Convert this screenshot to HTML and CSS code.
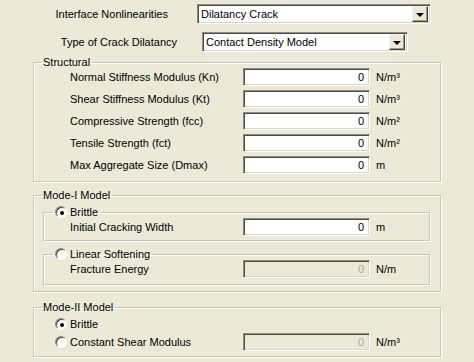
FILE: index.html
```html
<!DOCTYPE html>
<html>
<head>
<meta charset="utf-8">
<link rel="stylesheet" href="styles.css">
</head>
<body>
<div class="dlg">
  <div class="top-row">
    <span class="top-lbl l1">Interface Nonlinearities</span>
    <div class="combo c1"><span class="combo-txt">Dilatancy Crack</span><span class="arrow"><span class="tri"></span></span></div>
  </div>
  <div class="top-row r2">
    <span class="top-lbl l2">Type of Crack Dilatancy</span>
    <div class="combo c2"><span class="combo-txt">Contact Density Model</span><span class="arrow"><span class="tri"></span></span></div>
  </div>

  <fieldset class="grp structural">
    <legend class="lg">Structural</legend>
    <div class="body pad36">
      <div class="field"><span class="flbl">Normal Stiffness Modulus (Kn)</span><div class="inp">0</div><span class="unit">N/m³</span></div>
      <div class="field"><span class="flbl">Shear Stiffness Modulus (Kt)</span><div class="inp">0</div><span class="unit">N/m³</span></div>
      <div class="field"><span class="flbl">Compressive Strength (fcc)</span><div class="inp">0</div><span class="unit">N/m²</span></div>
      <div class="field"><span class="flbl">Tensile Strength (fct)</span><div class="inp">0</div><span class="unit">N/m²</span></div>
      <div class="field"><span class="flbl">Max Aggregate Size (Dmax)</span><div class="inp">0</div><span class="unit">m</span></div>
    </div>
  </fieldset>

  <fieldset class="grp mode1">
    <legend class="lg">Mode-I Model</legend>
    <div class="body m1body">
      <fieldset class="sub sub1">
        <legend class="lg rlg"><span class="radio on"></span>Brittle</legend>
        <div class="body pad26 s1body">
          <div class="field"><span class="flbl">Initial Cracking Width</span><div class="inp">0</div><span class="unit">m</span></div>
        </div>
      </fieldset>
      <fieldset class="sub sub2">
        <legend class="lg rlg"><span class="radio"></span>Linear Softening</legend>
        <div class="body pad26 s2body">
          <div class="field"><span class="flbl">Fracture Energy</span><div class="inp dis">0</div><span class="unit">N/m</span></div>
        </div>
      </fieldset>
    </div>
  </fieldset>

  <fieldset class="grp mode2">
    <legend class="lg">Mode-II Model</legend>
    <div class="body m2body">
      <div class="ropt r-first"><span class="radio on"></span><span>Brittle</span></div>
      <div class="field ropt-field"><span class="flbl rl"><span class="radio"></span><span>Constant Shear Modulus</span></span><div class="inp dis">0</div><span class="unit">N/m³</span></div>
    </div>
  </fieldset>
</div>
</body>
</html>
```

FILE: styles.css
```css
html, body {
  margin: 0;
  padding: 0;
  background: #ece9d8;
}
body {
  font-family: "Liberation Sans", Arial, sans-serif;
  font-size: 11px;
  color: #000;
  width: 474px;
  height: 362px;
  overflow: hidden;
}
.dlg {
  width: 474px;
}
.top-row {
  display: flex;
  align-items: center;
  height: 20px;
  margin-top: 4px;
}
.top-row.r2 {
  margin-top: 8px;
}
.top-lbl {
  text-align: right;
  flex: none;
}
.l1 { width: 168px; margin-right: 29px; }
.l2 { width: 177px; margin-right: 25px; }

.combo {
  box-sizing: border-box;
  height: 20px;
  background: #fff;
  border-top: 1px solid #8f8c7f;
  border-left: 1px solid #8f8c7f;
  border-right: 1px solid #fff;
  border-bottom: 1px solid #fff;
  box-shadow: inset 1px 1px 0 #4e4c45, inset -1px -1px 0 #d8d5c6;
  display: flex;
  align-items: center;
  padding: 0 2px 0 3px;
}
.c1 { width: 234px; }
.c2 { width: 206px; }
.combo-txt {
  flex: 1;
  white-space: nowrap;
  overflow: hidden;
}
.arrow {
  box-sizing: border-box;
  width: 16px;
  height: 16px;
  background: #ece9d8;
  border-top: 1px solid #f4f3ee;
  border-left: 1px solid #f4f3ee;
  border-right: 1px solid #404040;
  border-bottom: 1px solid #404040;
  box-shadow: inset -1px -1px 0 #9d9a8c;
  display: flex;
  align-items: center;
  justify-content: center;
}
.tri {
  width: 0;
  height: 0;
  border-left: 4px solid transparent;
  border-right: 4px solid transparent;
  border-top: 4px solid #000;
  margin-top: 1px;
}

fieldset {
  margin: 0;
  padding: 0;
  min-width: 0;
  border: 1px solid #c9c6b6;
  box-shadow: 1px 1px 0 #fdfdfb, inset 1px 1px 0 #fdfdfb;
}
.lg {
  padding: 0 2px;
  line-height: 12px;
  height: 12px;
  margin-left: 7px;
  display: flex;
  align-items: center;
}
.grp {
  margin-left: 33px;
  width: 408px;
  box-sizing: border-box;
}
.structural { margin-top: 4px; }
.mode1 { margin-top: 7px; }
.mode2 { margin-top: 9px; }

.pad36 { padding: 0 0 7px 36px; }
.pad26 { padding-left: 26px; }

.field {
  display: flex;
  align-items: center;
  height: 18px;
  margin-bottom: 4px;
}
.field:last-child { margin-bottom: 0; }
.flbl {
  width: 173px;
  flex: none;
  white-space: nowrap;
}
.inp {
  box-sizing: border-box;
  width: 127px;
  height: 18px;
  background: #fff;
  border-top: 1px solid #8f8c7f;
  border-left: 1px solid #8f8c7f;
  border-right: 1px solid #fff;
  border-bottom: 1px solid #fff;
  box-shadow: inset 1px 1px 0 #4e4c45, inset -1px -1px 0 #d8d5c6;
  text-align: right;
  padding-right: 5px;
  line-height: 16px;
  flex: none;
}
.inp.dis {
  background: #ece9d8;
  color: #aca899;
}
.unit {
  margin-left: 6px;
  white-space: nowrap;
}

.m1body { padding: 0 9px 6px 9px; }
.sub {
  width: 387px;
  box-sizing: border-box;
}
.sub1 { margin-top: 5px; }
.sub2 { margin-top: 7px; }
.rlg { margin-left: 9px; }
.s1body { padding-bottom: 4px; }
.s2body { padding-bottom: 6px; }

.radio {
  box-sizing: border-box;
  width: 12px;
  height: 12px;
  border-radius: 50%;
  background: #fff;
  border: 1px solid;
  border-color: #8f8c7f #fff #fff #8f8c7f;
  box-shadow: inset 1px 1px 0 #404040;
  margin-right: 3px;
  flex: none;
  display: inline-flex;
  align-items: center;
  justify-content: center;
}
.radio.on::after {
  content: "";
  width: 4px;
  height: 4px;
  border-radius: 50%;
  background: #000;
  margin: 1px 0 0 1px;
}

.m2body { padding: 3px 0 5px 21px; }
.ropt {
  display: flex;
  align-items: center;
  height: 16px;
  margin-bottom: 1px;
}
.ropt-field .rl {
  display: flex;
  align-items: center;
  width: 188px;
}
```
